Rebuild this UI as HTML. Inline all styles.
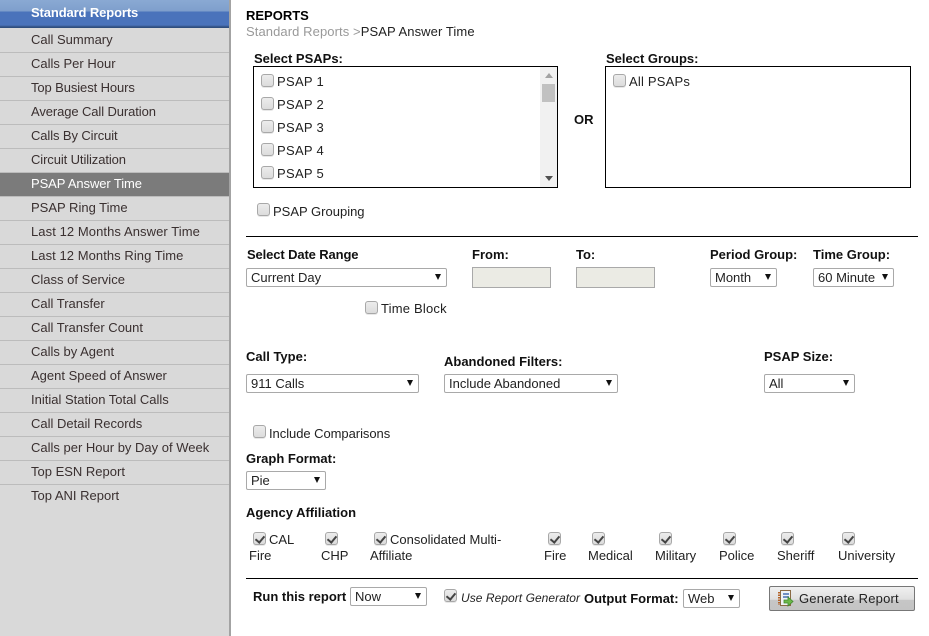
<!DOCTYPE html>
<html><head><meta charset="utf-8"><title>Reports</title>
<style>
html,body{margin:0;padding:0;background:#fff;width:929px;height:636px;overflow:hidden}
body{position:relative;font:13px/16px "Liberation Sans",Arial,sans-serif;color:#222}
.t,.b,.s,.c,.i,.box,.hr{position:absolute;white-space:nowrap}
.t,.b{margin-top:1px}
.b{font-weight:bold;color:#111}
#side{position:absolute;left:0;top:0;width:229px;height:636px;background:#d9d9d9;border-right:2px solid #a3a3a3}
#head{position:absolute;left:0;top:0;width:229px;height:28px;background:linear-gradient(#8aa9d3 0,#7f9fcc 11px,#4a73bb 12px,#4a73bb 25px,#3f639f 26px,#2f4e7e 27px);}
#head span{position:absolute;left:31px;top:5px;color:#fff;font-weight:bold;letter-spacing:-.12px}
.r{position:absolute;left:0;width:229px;height:24px;border-bottom:1px solid #bcbcbc;line-height:21px;padding-left:31px;box-sizing:border-box;color:#3a3030}
.r.on{background:#7b7b7b;color:#fff;border-bottom-color:#bcbcbc}
.s{box-sizing:border-box;height:19px;border:1px solid #a9a9a9;border-radius:2px;background:#fff;line-height:17px;padding-left:4px;color:#222}
.s:after{content:"";position:absolute;right:5px;top:5px;border-left:3.5px solid transparent;border-right:3.5px solid transparent;border-top:6px solid #111}
.c{width:13px;height:13px;box-sizing:border-box;border:1px solid #a8a8a8;border-radius:3px;background:linear-gradient(#ececec,#dcdcdc);box-shadow:0 1px 0 #e8e8e8}
.c.k:after{content:"";position:absolute;left:3px;top:1px;width:4px;height:7px;border:solid #444;border-width:0 2px 2px 0;transform:rotate(40deg)}
.i{box-sizing:border-box;height:21px;width:79px;background:#ebebe4;border:1px solid #a9a9a9;top:267px}
.box{box-sizing:border-box;border:1px solid #000;background:#fff}
.hr{left:246px;width:672px;height:1px;background:#000}
.p{letter-spacing:.3px}
</style></head><body>
<div id="side">
<div id="head"><span>Standard Reports</span></div>
<div class="r" style="top:29px">Call Summary</div>
<div class="r" style="top:53px">Calls Per Hour</div>
<div class="r" style="top:77px;letter-spacing:-.1px">Top Busiest Hours</div>
<div class="r" style="top:101px;letter-spacing:-.1px">Average Call Duration</div>
<div class="r" style="top:125px;letter-spacing:-.1px">Calls By Circuit</div>
<div class="r" style="top:149px;letter-spacing:-.1px">Circuit Utilization</div>
<div class="r on" style="top:173px;letter-spacing:-.1px">PSAP Answer Time</div>
<div class="r" style="top:197px">PSAP Ring Time</div>
<div class="r" style="top:221px;letter-spacing:.08px">Last 12 Months Answer Time</div>
<div class="r" style="top:245px;letter-spacing:.06px">Last 12 Months Ring Time</div>
<div class="r" style="top:269px">Class of Service</div>
<div class="r" style="top:293px">Call Transfer</div>
<div class="r" style="top:317px">Call Transfer Count</div>
<div class="r" style="top:341px">Calls by Agent</div>
<div class="r" style="top:365px">Agent Speed of Answer</div>
<div class="r" style="top:389px">Initial Station Total Calls</div>
<div class="r" style="top:413px">Call Detail Records</div>
<div class="r" style="top:437px">Calls per Hour by Day of Week</div>
<div class="r" style="top:461px">Top ESN Report</div>
<div class="r" style="top:485px;border-bottom:0">Top ANI Report</div>
</div>

<div class="b" style="left:246px;top:7px;color:#000">REPORTS</div>
<div class="t" style="left:246px;top:23px;color:#999;letter-spacing:.09px">Standard Reports &gt;<span style="color:#222">PSAP Answer Time</span></div>

<div class="b" style="left:254px;top:50px">Select PSAPs:</div>
<div class="box" style="left:253px;top:66px;width:305px;height:122px"></div>
<div class="t" style="left:540px;top:67px;margin-top:0;width:17px;height:120px;background:#f1f1f1"></div>
<div class="t" style="left:542px;top:84px;margin-top:0;width:13px;height:18px;background:#c1c1c1"></div>
<div class="t" style="left:545px;top:73px;margin-top:0;border-left:4px solid transparent;border-right:4px solid transparent;border-bottom:5px solid #a3a3a3"></div>
<div class="t" style="left:545px;top:176px;margin-top:0;border-left:4px solid transparent;border-right:4px solid transparent;border-top:5px solid #505050"></div>
<div class="c" style="left:261px;top:74px"></div><div class="t p" style="left:277px;top:73px">PSAP 1</div>
<div class="c" style="left:261px;top:97px"></div><div class="t p" style="left:277px;top:96px">PSAP 2</div>
<div class="c" style="left:261px;top:120px"></div><div class="t p" style="left:277px;top:119px">PSAP 3</div>
<div class="c" style="left:261px;top:143px"></div><div class="t p" style="left:277px;top:142px">PSAP 4</div>
<div class="c" style="left:261px;top:166px"></div><div class="t p" style="left:277px;top:165px">PSAP 5</div>
<div class="c" style="left:257px;top:203px"></div><div class="t" style="left:273px;top:203px">PSAP Grouping</div>

<div class="b" style="left:574px;top:111px">OR</div>
<div class="b" style="left:606px;top:50px">Select Groups:</div>
<div class="box" style="left:605px;top:66px;width:306px;height:122px"></div>
<div class="c" style="left:613px;top:74px"></div><div class="t" style="left:629px;top:73px;letter-spacing:.2px">All PSAPs</div>

<div class="hr" style="top:236px"></div>

<div class="b" style="left:247px;top:246px;letter-spacing:-.12px">Select Date Range</div>
<div class="b" style="left:472px;top:246px">From:</div>
<div class="b" style="left:576px;top:246px">To:</div>
<div class="b" style="left:710px;top:246px">Period Group:</div>
<div class="b" style="left:813px;top:246px">Time Group:</div>
<div class="s" style="left:246px;top:268px;width:201px">Current Day</div>
<div class="i" style="left:472px"></div>
<div class="i" style="left:576px"></div>
<div class="s" style="left:710px;top:268px;width:67px">Month</div>
<div class="s" style="left:813px;top:268px;width:81px">60 Minute</div>
<div class="c" style="left:365px;top:301px"></div><div class="t" style="left:381px;top:300px;letter-spacing:.2px">Time Block</div>

<div class="b" style="left:246px;top:348px">Call Type:</div>
<div class="b" style="left:444px;top:353px">Abandoned Filters:</div>
<div class="b" style="left:764px;top:348px">PSAP Size:</div>
<div class="s" style="left:246px;top:374px;width:173px">911 Calls</div>
<div class="s" style="left:444px;top:374px;width:174px">Include Abandoned</div>
<div class="s" style="left:764px;top:374px;width:91px">All</div>

<div class="c" style="left:253px;top:425px"></div><div class="t" style="left:269px;top:425px;letter-spacing:-.05px">Include Comparisons</div>
<div class="b" style="left:246px;top:450px">Graph Format:</div>
<div class="s" style="left:246px;top:471px;width:80px">Pie</div>
<div class="b" style="left:246px;top:504px">Agency Affiliation</div>

<div class="c k" style="left:253px;top:532px"></div><div class="t" style="left:269px;top:531px">CAL</div><div class="t" style="left:249px;top:547px">Fire</div>
<div class="c k" style="left:325px;top:532px"></div><div class="t" style="left:321px;top:547px">CHP</div>
<div class="c k" style="left:374px;top:532px"></div><div class="t" style="left:390px;top:531px">Consolidated Multi-</div><div class="t" style="left:370px;top:547px">Affiliate</div>
<div class="c k" style="left:548px;top:532px"></div><div class="t" style="left:544px;top:547px">Fire</div>
<div class="c k" style="left:592px;top:532px"></div><div class="t" style="left:588px;top:547px">Medical</div>
<div class="c k" style="left:659px;top:532px"></div><div class="t" style="left:655px;top:547px">Military</div>
<div class="c k" style="left:723px;top:532px"></div><div class="t" style="left:719px;top:547px">Police</div>
<div class="c k" style="left:781px;top:532px"></div><div class="t" style="left:777px;top:547px">Sheriff</div>
<div class="c k" style="left:842px;top:532px"></div><div class="t" style="left:838px;top:547px">University</div>

<div class="hr" style="top:578px"></div>

<div class="b" style="left:253px;top:588px">Run this report</div>
<div class="s" style="left:350px;top:587px;width:77px">Now</div>
<div class="c k" style="left:444px;top:589px"></div>
<div class="t" style="left:461px;top:589px;font-style:italic;font-size:12px;letter-spacing:.05px">Use Report Generator</div>
<div class="b" style="left:584px;top:590px">Output Format:</div>
<div class="s" style="left:683px;top:589px;width:57px">Web</div>

<div class="t" style="left:769px;top:586px;margin-top:0;width:146px;height:25px;box-sizing:border-box;border:1px solid #777;border-radius:2px;background:linear-gradient(#f0f0f0 0,#dfdfdf 55%,#c6c6c6 56%,#c4c4c4 100%)">
<svg style="position:absolute;left:8px;top:3px" width="16" height="18" viewBox="0 0 16 18"><rect x="2.5" y=".5" width="10" height="15" fill="#eef2f6" stroke="#8a6a45"/><path d="M1 2v13" stroke="#b5642a" stroke-width="2" stroke-dasharray="1.5 1"/><rect x="5" y="3" width="6" height="2" fill="#6f8fc4"/><rect x="5" y="6" width="6" height="2" fill="#6f8fc4"/><path d="M6 10h4V7l5 4.5L10 16v-3H6z" fill="#6cb84a" stroke="#3f8a2c" stroke-width=".8"/></svg>
<span style="position:absolute;left:29px;top:4px;color:#222;white-space:nowrap;letter-spacing:.2px">Generate Report</span></div>
</body></html>
